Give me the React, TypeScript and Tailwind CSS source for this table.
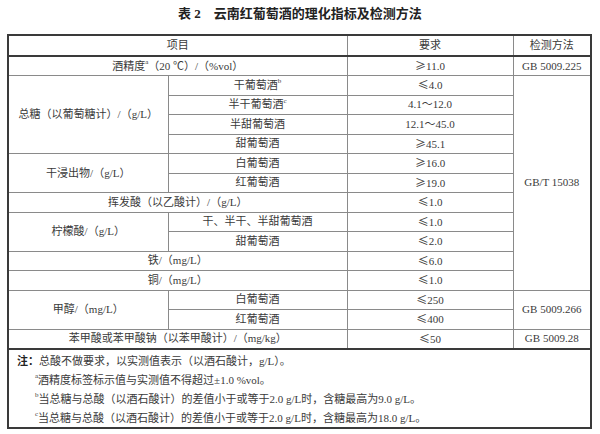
const font = { fontFamily: '"Liberation Serif", "Noto Sans CJK SC", serif' };

const Sup = ({ c }: { c: string }) => (
  <sup className="text-[7px] relative top-[-1px] align-super leading-none">{c}</sup>
);

// comparison signs are drawn full width, as in the printed standard
const Req = ({ v }: { v: string }) => {
  const s = v[0];
  if (s === "≤" || s === "≥")
    return (
      <>
        <span style={{ fontFamily: '"Noto Sans CJK SC", sans-serif' }}>{s}</span>
        {v.slice(1)}
      </>
    );
  return <>{v}</>;
};

type Row = {
  name?: React.ReactNode;
  nameSpan?: number;
  sub?: React.ReactNode;
  req: string;
  method?: string;
  methodSpan?: number;
};

const rows: Row[] = [
  { name: <>酒精度<Sup c="a" />（20 ℃）/（%vol）</>, req: "≥11.0", method: "GB 5009.225", methodSpan: 1 },
  { name: "总糖（以葡萄糖计）/（g/L）", nameSpan: 4, sub: <>干葡萄酒<Sup c="b" /></>, req: "≤4.0", method: "GB/T 15038", methodSpan: 11 },
  { sub: <>半干葡萄酒<Sup c="c" /></>, req: "4.1～12.0" },
  { sub: "半甜葡萄酒", req: "12.1～45.0" },
  { sub: "甜葡萄酒", req: "≥45.1" },
  { name: "干浸出物/（g/L）", nameSpan: 2, sub: "白葡萄酒", req: "≥16.0" },
  { sub: "红葡萄酒", req: "≥19.0" },
  { name: "挥发酸（以乙酸计）/（g/L）", req: "≤1.0" },
  { name: "柠檬酸/（g/L）", nameSpan: 2, sub: "干、半干、半甜葡萄酒", req: "≤1.0" },
  { sub: "甜葡萄酒", req: "≤2.0" },
  { name: "铁/（mg/L）", req: "≤6.0" },
  { name: "铜/（mg/L）", req: "≤1.0" },
  { name: "甲醇/（mg/L）", nameSpan: 2, sub: "白葡萄酒", req: "≤250", method: "GB 5009.266", methodSpan: 2 },
  { sub: "红葡萄酒", req: "≤400" },
  { name: "苯甲酸或苯甲酸钠（以苯甲酸计）/（mg/kg）", req: "≤50", method: "GB 5009.28", methodSpan: 1 },
];

const cell = "border border-[#8a8a8a] text-center p-0 align-middle";

export default function App() {
  return (
    <div className="w-[600px] h-[434px] bg-white text-[#3a3a3a] text-[11px]" style={font}>
      <div className="h-[34px] pt-[6px] text-center text-[13px] font-bold text-[#222] leading-[16px]">
        表 2　云南红葡萄酒的理化指标及检测方法
      </div>
      <table className="ml-[7px] w-[583px] table-fixed border-collapse border-2 border-[#3a3a3a]">
        <colgroup>
          <col className="w-[160px]" />
          <col className="w-[179px]" />
          <col className="w-[166px]" />
          <col className="w-[78px]" />
        </colgroup>
        <tbody>
          <tr className="h-[21px]">
            <td colSpan={2} className={cell + " border-b-2 border-b-[#3a3a3a]"}>项目</td>
            <td className={cell + " border-b-2 border-b-[#3a3a3a]"}>要求</td>
            <td className={cell + " border-b-2 border-b-[#3a3a3a]"}>检测方法</td>
          </tr>
          {rows.map((r, i) => {
            const last = i === rows.length - 1;
            const b = last ? " border-b-2 border-b-[#3a3a3a]" : "";
            return (
              <tr key={i} className="h-[19.5px] leading-[17px]">
                {r.name !== undefined && r.sub === undefined && (
                  <td colSpan={2} className={cell + b}>{r.name}</td>
                )}
                {r.name !== undefined && r.sub !== undefined && (
                  <td rowSpan={r.nameSpan} className={cell}>{r.name}</td>
                )}
                {r.sub !== undefined && <td className={cell + b}>{r.sub}</td>}
                <td className={cell + b}><Req v={r.req} /></td>
                {r.method && (
                  <td rowSpan={r.methodSpan} className={cell + b}>{r.method}</td>
                )}
              </tr>
            );
          })}
          <tr>
            <td colSpan={4} className="border-0 p-0">
              <div className="h-[77px] pt-[2px] pl-[8px] leading-[19px]">
                <div><span className="font-bold text-[#222]">注：</span>总酸不做要求，以实测值表示（以酒石酸计，g/L）。</div>
                <div className="ml-[18px]"><Sup c="a" />酒精度标签标示值与实测值不得超过±1.0 %vol。</div>
                <div className="ml-[18px]"><Sup c="b" />当总糖与总酸（以酒石酸计）的差值小于或等于2.0 g/L时，含糖最高为9.0 g/L。</div>
                <div className="ml-[18px]"><Sup c="c" />当总糖与总酸（以酒石酸计）的差值小于或等于2.0 g/L时，含糖最高为18.0 g/L。</div>
              </div>
            </td>
          </tr>
        </tbody>
      </table>
    </div>
  );
}
